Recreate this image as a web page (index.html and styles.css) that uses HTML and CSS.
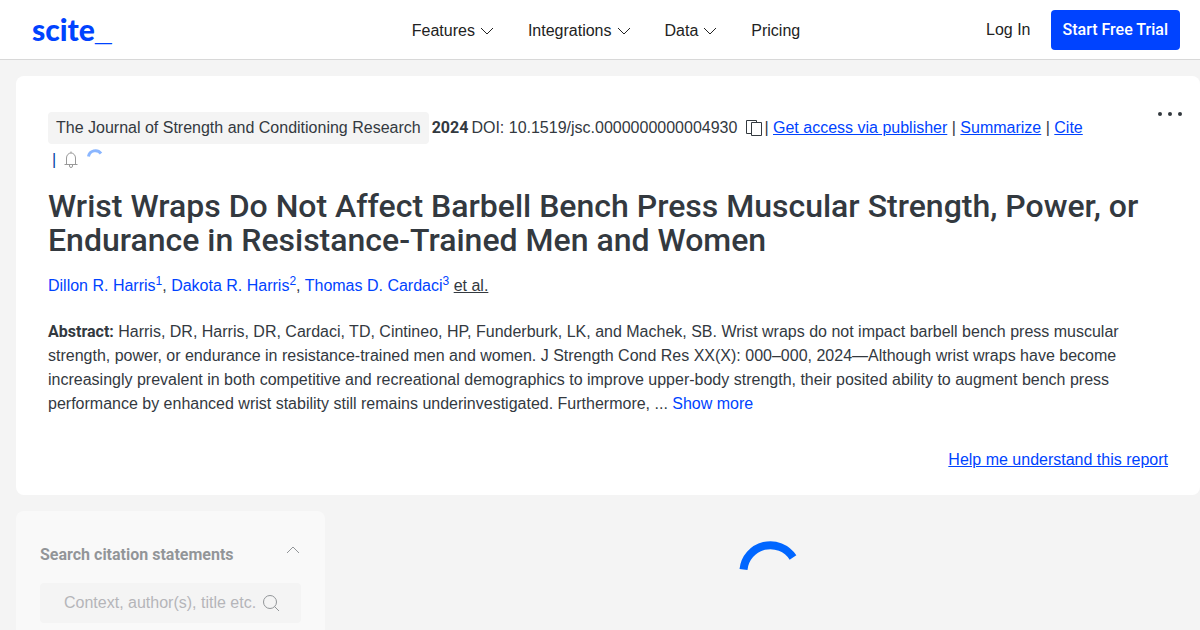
FILE: index.html
```html
<!DOCTYPE html>
<html lang="en">
<head>
<meta charset="UTF-8">
<meta name="viewport" content="width=device-width, initial-scale=1">
<title>Wrist Wraps Do Not Affect Barbell Bench Press - scite</title>
<link rel="stylesheet" href="styles.css">
</head>
<body>

<header class="site-header">
  <a class="logo" href="#">scite<span>_</span></a>
  <nav class="main-nav">
    <button class="nav-item" type="button">Features
      <svg class="chevron" viewBox="0 0 14 8"><path d="M1 1l6 6 6-6"/></svg>
    </button>
    <button class="nav-item" type="button">Integrations
      <svg class="chevron" viewBox="0 0 14 8"><path d="M1 1l6 6 6-6"/></svg>
    </button>
    <button class="nav-item" type="button">Data
      <svg class="chevron" viewBox="0 0 14 8"><path d="M1 1l6 6 6-6"/></svg>
    </button>
    <a class="nav-item" href="#">Pricing</a>
  </nav>
  <div class="account">
    <a class="login" href="#">Log In</a>
    <a class="btn-trial" href="#">Start Free Trial</a>
  </div>
</header>

<main>
  <article class="paper">
    <div class="paper-top">
      <div class="meta">
        <span class="journal">The Journal of Strength and Conditioning Research</span>
        <strong>2024</strong>
        <span class="doi">DOI: 10.1519/jsc.0000000000004930</span>
        <span class="links">
          <button class="icon-btn" type="button" aria-label="Copy DOI">
            <svg width="18" height="18" viewBox="0 0 18 18"><path d="M6 14.500H1.500V1.500H11.500V3.500M6.500 3.500H16.500V16.500H6.500z"/></svg>
          </button>
          <span>| <a href="#">Get access via publisher</a> | <a href="#">Summarize</a> | <a href="#">Cite</a></span>
        </span>
        <span class="follow">
          <span class="bar">|</span>
          <button class="icon-btn bell" type="button" aria-label="Follow paper">
            <svg width="14" height="18" viewBox="0 0 14 18"><path d="M.5 13.500h13M2.500 13.500V7a4.500 5 0 0 1 9 0v6.500M7 2V.5M5.500 14v1a1.500 1.500 0 0 0 3 0v-1"/></svg>
          </button>
          <svg class="spinner-small" width="18" height="22" viewBox="0 0 18 22"><path d="M2.500 7.500a7 7 0 0 1 12.500-3"/></svg>
        </span>
      </div>
      <button class="more" type="button" aria-label="More options">
        <svg width="24" height="4" viewBox="0 0 24 4"><circle cx="2" cy="2" r="2"/><circle cx="12" cy="2" r="2"/><circle cx="22" cy="2" r="2"/></svg>
      </button>
    </div>

    <h1>Wrist Wraps Do Not Affect Barbell Bench Press Muscular Strength, Power, or Endurance in Resistance-Trained Men and Women</h1>

    <p class="authors"><a href="#">Dillon R. Harris<sup>1</sup></a>, <a href="#">Dakota R. Harris<sup>2</sup></a>, <a href="#">Thomas D. Cardaci<sup>3</sup></a> <button class="et-al" type="button">et al.</button></p>

    <p class="abstract"><strong>Abstract:</strong> Harris, DR, Harris, DR, Cardaci, TD, Cintineo, HP, Funderburk, LK, and Machek, SB. Wrist wraps do not impact barbell bench press muscular strength, power, or endurance in resistance-trained men and women. J Strength Cond Res XX(X): 000–000, 2024—Although wrist wraps have become increasingly prevalent in both competitive and recreational demographics to improve upper-body strength, their posited ability to augment bench press performance by enhanced wrist stability still remains underinvestigated. Furthermore, ... <a href="#">Show more</a></p>

    <div class="help"><a href="#">Help me understand this report</a></div>
  </article>

  <div class="columns">
    <aside class="filters">
      <div class="filters-head">
        <label for="search">Search citation statements</label>
        <button class="icon-btn" type="button" aria-label="Collapse">
          <svg class="chevron" viewBox="0 0 14 8"><path d="M1 7l6-6 6 6"/></svg>
        </button>
      </div>
      <div class="search-box">
        <input id="search" type="text" placeholder="Context, author(s), title etc.">
        <svg width="18" height="18" viewBox="0 0 18 18"><circle cx="8" cy="8" r="6.500"/><path d="M12.500 12.500l4.500 4.500"/></svg>
      </div>
    </aside>
    <section class="results">
      <svg width="64" height="64" viewBox="0 0 64 64"><path d="M5.500 28.500a27 27 0 0 1 49.500-12"/></svg>
    </section>
  </div>
</main>

</body>
</html>
```
FILE: styles.css
```css
* {
  box-sizing: border-box;
}
body {
  margin: 0;
  display: flex;
  flex-direction: column;
  min-height: 100vh;
  font-family: "Liberation Sans", Arial, sans-serif;
  font-size: 16px;
  line-height: 24px;
  color: #33393f;
  background: #f4f4f4;
}
a {
  color: #0043ff;
}
button {
  padding: 0;
  border: 0;
  background: none;
  font: inherit;
  color: inherit;
  cursor: pointer;
}
svg {
  fill: none;
  stroke: currentColor;
}
strong,
label {
  font-family: Roboto, sans-serif;
  font-weight: 700;
}

/* Header */
.site-header {
  display: grid;
  grid-template-columns: 1fr auto 1fr;
  align-items: center;
  height: 60px;
  padding: 0 20px 0 32px;
  background: #fff;
  border-bottom: 1px solid #d8d8d8;
}
.logo {
  font-family: Lato, sans-serif;
  font-size: 30px;
  font-weight: 900;
  color: #0043ff;
  text-decoration: none;
}
.logo span {
  font-family: "Liberation Sans", Arial, sans-serif;
}
.main-nav {
  display: flex;
  gap: 34px;
  padding-top: 2px;
}
.nav-item,
.login {
  color: #222;
  text-decoration: none;
}
.nav-item {
  display: flex;
  align-items: center;
  gap: 5px;
}
.chevron {
  width: 14px;
  height: 8px;
}
.account {
  display: flex;
  align-items: center;
  justify-content: flex-end;
  gap: 20px;
}
.btn-trial {
  padding: 8px 12px;
  border-radius: 4px;
  background: #0043ff;
  color: #fff;
  font-family: Roboto, sans-serif;
  font-weight: 500;
  text-decoration: none;
}

/* Paper summary */
main {
  flex: 1;
  display: flex;
  flex-direction: column;
  padding: 16px 0 0 16px;
}
.paper {
  padding: 36px 32px 23px;
  border-radius: 8px;
  background: #fff;
}
.paper-top {
  display: flex;
  justify-content: space-between;
}
.meta {
  display: flex;
  flex-wrap: wrap;
  align-items: center;
  column-gap: 3px;
  max-width: 1070px;
  line-height: 32px;
}
.journal {
  padding: 0 8px;
  border-radius: 4px;
  background: #f4f4f4;
}
.icon-btn {
  display: flex;
}
.links {
  display: flex;
  align-items: center;
  gap: 1px;
  margin-left: 5px;
}
.follow {
  display: flex;
  align-items: center;
  gap: 8px;
  flex-basis: 100%;
  padding-left: 4px;
}
.bar {
  color: #0043a0;
}
.bell {
  color: #999;
}
.spinner-small {
  color: #8ab6ff;
  stroke-width: 3;
}
.more {
  align-self: flex-start;
  margin-right: -14px;
}
.more svg {
  display: block;
  fill: currentColor;
  stroke: none;
}
h1 {
  margin: 13px 0 17px;
  font-family: Roboto, sans-serif;
  font-size: 32px;
  line-height: 34px;
  font-weight: 500;
}
.authors {
  margin: 0 0 22px;
}
.authors a,
.abstract a {
  text-decoration: none;
}
sup {
  font-size: 12px;
  line-height: 0;
}
.et-al {
  text-decoration: underline;
}
.abstract {
  margin: 0 0 32px;
}
.help {
  text-align: right;
}

/* Citation search and results */
.columns {
  flex: 1;
  display: flex;
  margin-top: 16px;
}
.filters {
  flex: 0 0 309px;
  min-width: 0;
  padding: 32px 24px 0;
  border-radius: 8px 8px 0 0;
  background: #fff;
  opacity: 0.5;
}
.filters-head {
  display: flex;
  justify-content: space-between;
  padding-right: 1px;
  margin-bottom: 16px;
}
.filters-head .icon-btn {
  padding-top: 3px;
}
.search-box {
  display: flex;
  align-items: center;
  height: 40px;
  padding: 0 21px 0 24px;
  border-radius: 4px;
  background: #f4f4f4;
}
.search-box input {
  flex: 1;
  min-width: 0;
  padding: 0;
  border: 0;
  background: none;
  font: inherit;
}
.search-box input::placeholder {
  color: #77777f;
}
.search-box svg {
  flex: none;
}
.results {
  flex: 1;
  padding: 30px 0 0 15px;
  text-align: center;
  color: #0066ff;
}
.results svg {
  display: block;
  margin: 0 auto;
  stroke-width: 8;
}
```
